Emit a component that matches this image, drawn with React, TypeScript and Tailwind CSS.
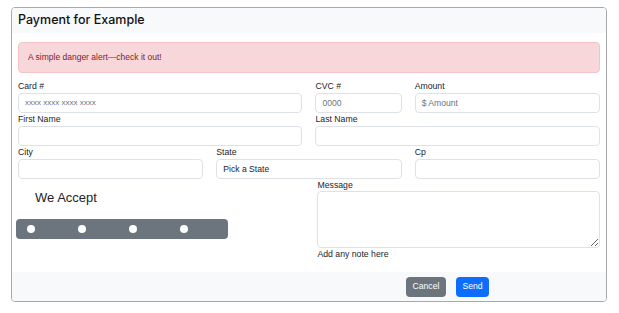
import React from 'react';

const font = { fontFamily: '"Liberation Sans", Arial, sans-serif' };

function Field({ label, span, placeholder, value, small }: { label: string; span: string; placeholder?: string; value?: string; small?: boolean }) {
    return (
        <div className={`${span} flex flex-col`}>
            <label className="h-[13px] text-[8.7px] leading-[13px] text-[#212529]">{label}</label>
            <div
                className={`h-[20px] rounded-[4px] border border-[#dee2e6] bg-white px-[6px] flex items-center ${
                    small ? 'text-[8px]' : 'text-[8.6px]'
                } ${value ? 'text-[#212529]' : 'text-[#6c757d]'}`}
            >
                {value ?? placeholder}
            </div>
        </div>
    );
}

export default function App() {
    return (
        <div className="pt-[7px] pl-[11px]" style={font}>
            <div className="w-[596px] h-[295px] rounded-[4px] border border-[#a8a8a8] bg-white flex flex-col overflow-hidden">
                {/* Header */}
                <div className="h-[25px] shrink-0 bg-[#f8f9fa] px-[6px] flex items-center text-[12.5px] font-medium text-[#111] font-[Inter,sans-serif]">
                    Payment for Example
                </div>

                <div className="flex-1 px-[6px]">
                    <div className="mt-[9px] h-[31px] rounded-[4px] border border-[#f5c2c7] bg-[#f8d7da] px-[9px] flex items-center text-[8.5px] text-[#842029]">
                        A simple danger alert—check it out!
                    </div>

                    <div className="mt-[7px] grid grid-cols-12 gap-x-[13px]">
                        <Field label="Card #" span="col-span-6" placeholder="xxxx xxxx xxxx xxxx" small />
                        <Field label="CVC #" span="col-span-2" placeholder="0000" />
                        <Field label="Amount" span="col-span-4" placeholder="$ Amount" />

                        <Field label="First Name" span="col-span-6" />
                        <Field label="Last Name" span="col-span-6" />

                        <Field label="City" span="col-span-4" />
                        <Field label="State" span="col-span-4" value="Pick a State" />
                        <Field label="Cp" span="col-span-4" />

                        {/* We accept */}
                        <div className="col-span-6 pt-[11px]">
                            <div className="pl-[17px] text-[13px] leading-[16px] text-[#212529]">We Accept</div>
                            <div className="mt-[13px] -ml-[2px] w-[212px] h-[20px] rounded-[4px] bg-[#6c757d] flex items-center pl-[11px] gap-[43px]">
                                <span className="w-[8px] h-[8px] rounded-full bg-white" />
                                <span className="w-[8px] h-[8px] rounded-full bg-white" />
                                <span className="w-[8px] h-[8px] rounded-full bg-white" />
                                <span className="w-[8px] h-[8px] rounded-full bg-white" />
                            </div>
                        </div>

                        <div className="col-span-6 pl-[2px] flex flex-col">
                            <label className="h-[12px] text-[8.7px] leading-[12px] text-[#212529]">Message</label>
                            <textarea className="h-[57px] rounded-[4px] border border-[#dee2e6] outline-none" />
                            <div className="text-[8.7px] leading-[13px] text-[#212529]">Add any note here</div>
                        </div>
                    </div>
                </div>

                {/* Footer */}
                <div className="h-[29px] shrink-0 bg-[#f8f9fa] flex items-center pl-[394px] gap-[10px]">
                    <button className="w-[40px] h-[20px] rounded-[4px] bg-[#6c757d] text-[8.6px] text-white">Cancel</button>
                    <button className="w-[33px] h-[20px] rounded-[4px] bg-[#0d6efd] text-[8.6px] text-white">Send</button>
                </div>
            </div>
        </div>
    );
}
